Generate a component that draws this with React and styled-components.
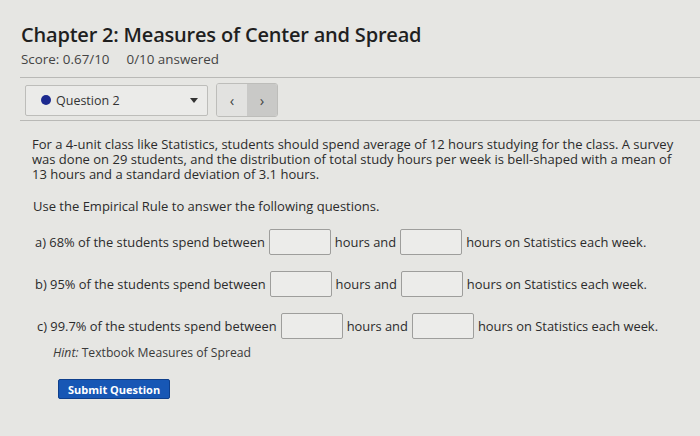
import React from "react";
import styled, { createGlobalStyle } from "styled-components";

const Global = createGlobalStyle`
  html, body { margin: 0; padding: 0; }
  body {
    background: #e6e6e3;
    font-family: "Open Sans", "Liberation Sans", Arial, sans-serif;
    color: #2b2b2b;
    width: 700px;
    height: 436px;
    overflow: hidden;
  }
`;

const Page = styled.div`
  padding: 20px 0 0 20px;
`;

const Title = styled.h1`
  margin: 0 0 0 1px;
  font-size: 20px;
  font-weight: 600;
  color: #1f1f1f;
  letter-spacing: -0.2px;
  line-height: 30px;
`;

const ScoreLine = styled.div`
  display: flex;
  gap: 17px;
  margin: 0 0 0 1px;
  font-size: 13.4px;
  color: #444;
`;

const Divider = styled.div`
  height: 1px;
  background: #b9b9b6;
  margin-top: ${(p) => p.$top || 0}px;
`;

const NavBar = styled.div`
  display: flex;
  align-items: center;
  gap: 8px;
  padding: 5px 0 3px 5px;
`;

const Select = styled.div`
  display: flex;
  align-items: center;
  width: 183px;
  height: 31px;
  box-sizing: border-box;
  border: 1px solid #bdbdba;
  border-radius: 2px;
  background: #ebebe9;
  padding: 0 9px 0 15px;
  font-size: 12.5px;
  color: #333;
`;

const Dot = styled.span`
  width: 10px;
  height: 10px;
  border-radius: 50%;
  background: #1c2a8f;
  margin-right: 5px;
`;

const Caret = styled.span`
  margin-left: auto;
  width: 0;
  height: 0;
  border-left: 4px solid transparent;
  border-right: 4px solid transparent;
  border-top: 5px solid #333;
`;

const ButtonGroup = styled.div`
  display: flex;
  height: 32px;
  border: 1px solid #bdbdba;
  border-radius: 3px;
  overflow: hidden;
`;

const NavButton = styled.div`
  width: 30px;
  display: flex;
  align-items: center;
  justify-content: center;
  background: ${(p) => (p.$active ? "#c9c9c7" : "#e2e2e0")};
  color: #444;
  font-size: 15px;
`;

const Body = styled.div`
  padding: 16px 0 0 12px;
`;

const Para = styled.p`
  margin: 0;
  width: 648px;
  font-size: 13px;
  line-height: 15px;
  color: #2b2b2b;
`;

const Instruction = styled.p`
  margin: 15px 0 0 1px;
  font-size: 13px;
  color: #2b2b2b;
`;

const Row = styled.div`
  display: flex;
  align-items: center;
  gap: 4px;
  margin: ${(p) => p.$top}px 0 0 ${(p) => p.$indent || 3}px;
  font-size: 12.9px;
  color: #2b2b2b;
`;

const Blank = styled.div`
  width: 62px;
  height: 26px;
  box-sizing: border-box;
  border: 1px solid #9e9e9c;
  border-radius: 2px;
  background: #ececea;
`;

const Hint = styled.div`
  margin: 5px 0 0 21px;
  font-size: 12.2px;
  color: #3a3a3a;
  em { font-style: italic; }
`;

const Submit = styled.button`
  margin: 18px 0 0 26px;
  height: 20px;
  padding: 0 9px;
  border: 1px solid #0e3f8c;
  border-radius: 2px;
  background: #1757b5;
  color: #fff;
  font-family: "Open Sans", "Liberation Sans", Arial, sans-serif;
  font-weight: 700;
  font-size: 11px;
`;

const rows = [
  { label: "a) 68% of the students spend between", top: 14, indent: 3 },
  { label: "b) 95% of the students spend between", top: 16, indent: 3 },
  { label: "c) 99.7% of the students spend between", top: 16, indent: 5 },
];

export default function App() {
  return (
    <>
      <Global />
      <Page>
        <Title>Chapter 2: Measures of Center and Spread</Title>
        <ScoreLine>
          <span>Score: 0.67/10</span>
          <span>0/10 answered</span>
        </ScoreLine>
        <Divider $top={9} />
        <NavBar>
          <Select>
            <Dot />
            Question 2
            <Caret />
          </Select>
          <ButtonGroup>
            <NavButton>‹</NavButton>
            <NavButton $active>›</NavButton>
          </ButtonGroup>
        </NavBar>
        <Divider />
        <Body>
          <Para>
            For a 4-unit class like Statistics, students should spend average of 12 hours studying for the class. A survey
            was done on 29 students, and the distribution of total study hours per week is bell-shaped with a mean of
            13 hours and a standard deviation of 3.1 hours.
          </Para>
          <Instruction>Use the Empirical Rule to answer the following questions.</Instruction>
          {rows.map((r) => (
            <Row key={r.label} $top={r.top} $indent={r.indent}>
              <span>{r.label}</span>
              <Blank />
              <span>hours and</span>
              <Blank />
              <span>hours on Statistics each week.</span>
            </Row>
          ))}
          <Hint>
            <em>Hint:</em> Textbook Measures of Spread
          </Hint>
          <Submit>Submit Question</Submit>
        </Body>
      </Page>
    </>
  );
}
